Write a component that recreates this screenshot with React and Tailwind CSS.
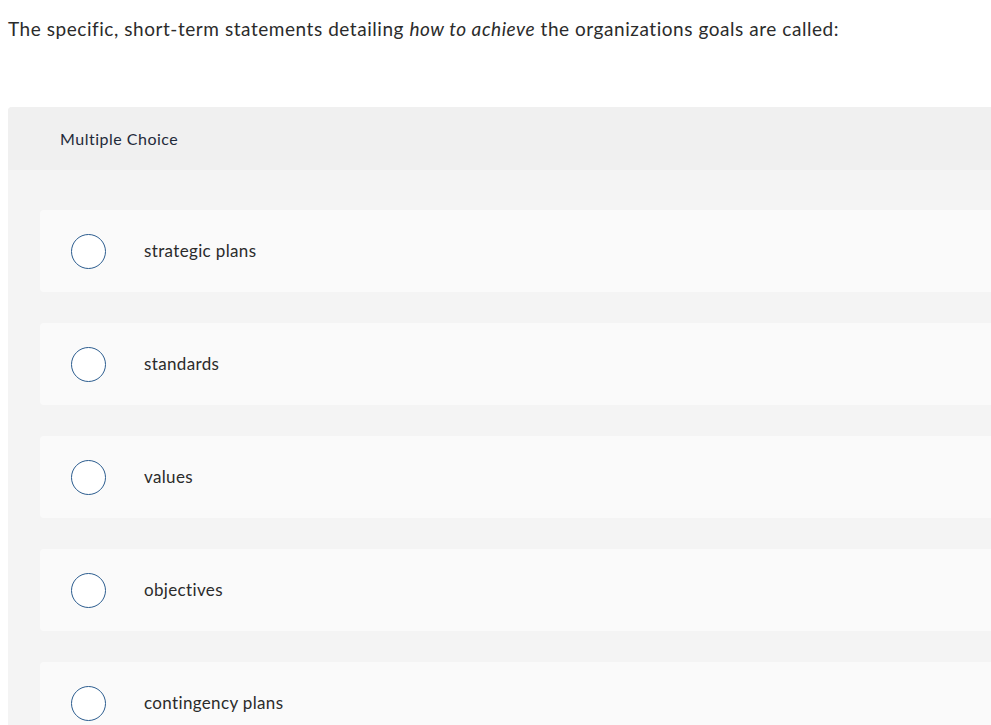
const OPTIONS = ['strategic plans', 'standards', 'values', 'objectives', 'contingency plans']

function Option({ label }) {
  return (
    <div className="h-[82px] bg-[#fafafa] rounded-l-[4px] flex items-center pl-[31px]">
      <div className="w-[35px] h-[35px] rounded-full border-[1.5px] border-[#2c5d8f] bg-white flex-shrink-0" />
      <div className="ml-[38px] text-[17px] tracking-[0.35px] text-[#2b2b2b]">{label}</div>
    </div>
  )
}

export default function App() {
  return (
    <div className="h-[725px] overflow-hidden bg-white font-['Lato','Open_Sans',sans-serif]">
      <div className="pl-2 pt-[16px] text-[19px] tracking-[0.55px] text-[#2b2b2b] leading-[26px]">
        The specific, short-term statements detailing <em>how to achieve</em> the organizations goals are called:
      </div>

      <div className="ml-2 mt-[65px] bg-[#f4f4f4] rounded-tl-[4px]">
        <div className="h-[63px] bg-[#f0f0f0] rounded-tl-[4px] flex items-center pl-[52px] text-[16px] tracking-[0.5px] text-[#1f2a3a]">
          Multiple Choice
        </div>
        <div className="pt-[40px] pl-8 flex flex-col gap-[31px]">
          {OPTIONS.map(o => <Option key={o} label={o} />)}
        </div>
      </div>
    </div>
  )
}
